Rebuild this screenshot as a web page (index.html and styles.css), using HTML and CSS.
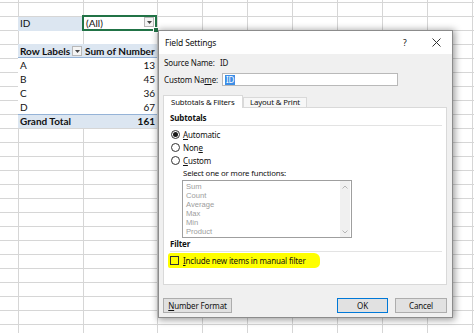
FILE: index.html
```html
<!DOCTYPE html>
<html>
<head>
<meta charset="utf-8">
<link rel="stylesheet" href="styles.css">
</head>
<body>
<div class="sheet">
  <div class="pivot">
    <div class="row r-filter">
      <div class="cell label-cell">ID</div>
      <div class="cell value-cell selected">(All)
        <span class="dd"><svg width="5" height="3" viewBox="0 0 5 3"><path d="M0 0h5L2.5 3z" fill="#444"/></svg></span>
        <span class="handle"></span>
      </div>
    </div>
    <div class="row r-gap"></div>
    <div class="row r-head">
      <div class="cell">Row Labels
        <span class="dd"><svg width="5" height="3" viewBox="0 0 5 3"><path d="M0 0h5L2.5 3z" fill="#444"/></svg></span>
      </div>
      <div class="cell">Sum of Number</div>
    </div>
    <div class="row r-data"><div class="cell">A</div><div class="cell num">13</div></div>
    <div class="row r-data"><div class="cell">B</div><div class="cell num">45</div></div>
    <div class="row r-data"><div class="cell">C</div><div class="cell num">36</div></div>
    <div class="row r-data"><div class="cell">D</div><div class="cell num">67</div></div>
    <div class="row r-total"><div class="cell">Grand Total</div><div class="cell num">161</div></div>
  </div>

  <div class="dialog">
    <div class="titlebar">
      <span class="title">Field Settings</span>
      <span class="help">?</span>
      <svg class="close" width="9" height="9" viewBox="0 0 9 9"><path d="M0.5 0.5l8 8M8.5 0.5l-8 8" stroke="#333" stroke-width="1"/></svg>
    </div>
    <div class="dbody">
      <div class="field"><span class="flabel">Source Name:</span><span>ID</span></div>
      <div class="field"><span class="flabel">Custom Na<u>m</u>e:</span><div class="input"><span class="sel">ID</span></div></div>
      <div class="tabs">
        <div class="tab active">Subtotals &amp; Filters</div>
        <div class="tab">Layout &amp; Print</div>
      </div>
      <div class="panel">
        <div class="section">Subtotals</div>
        <div class="radios">
          <div class="opt"><span class="radio on"></span><span><u>A</u>utomatic</span></div>
          <div class="opt"><span class="radio"></span><span>Non<u>e</u></span></div>
          <div class="opt"><span class="radio"></span><span><u>C</u>ustom</span></div>
        </div>
        <div class="hint">Select one or more functions:</div>
        <div class="listbox">
          <ul class="items">
            <li>Sum</li><li>Count</li><li>Average</li><li>Max</li><li>Min</li><li>Product</li>
          </ul>
          <div class="scroll">
            <svg width="6" height="4" viewBox="0 0 6 4"><path d="M0.5 3.5L3 1l2.5 2.5" fill="none" stroke="#b5b5b5"/></svg>
            <svg width="6" height="4" viewBox="0 0 6 4"><path d="M0.5 0.5L3 3l2.5-2.5" fill="none" stroke="#b5b5b5"/></svg>
          </div>
        </div>
        <div class="section">Filter</div>
        <div class="check-row">
          <span class="hl"><span class="checkbox"></span><span><u>I</u>nclude new items in manual filter</span></span>
        </div>
      </div>
      <div class="buttons">
        <button class="btn btn-nf"><u>N</u>umber Format</button>
        <button class="btn btn-ok">OK</button>
        <button class="btn btn-cancel">Cancel</button>
      </div>
    </div>
  </div>
</div>
</body>
</html>
```

FILE: styles.css
```css
html, body {
  margin: 0;
  padding: 0;
}
body {
  width: 474px;
  height: 333px;
  overflow: hidden;
  background: #fff;
}
.sheet {
  position: relative;
  height: 333px;
  box-sizing: border-box;
  padding-top: 16px;
  background-color: #fff;
  background-image:
    linear-gradient(#d6d6d6, #d6d6d6),
    linear-gradient(#d6d6d6, #d6d6d6),
    repeating-linear-gradient(to right, #d6d6d6 0 1px, transparent 1px 45px),
    repeating-linear-gradient(to bottom, #d6d6d6 0 1px, transparent 1px 14px);
  background-size: 1px 100%, 1px 100%, 100% 100%, 100% 100%;
  background-position: 18px 0, 83px 0, 157px 0, 0 2px;
  background-repeat: no-repeat;
}

/* Pivot table */
.pivot {
  margin-left: 18px;
  width: 139px;
}
.row {
  display: grid;
  grid-template-columns: 65px 74px;
  height: 14px;
}
.cell {
  position: relative;
  box-sizing: border-box;
  padding: 0 2px;
  font: 10px/14px Lato, "Liberation Sans", sans-serif;
  color: #111;
  white-space: nowrap;
}
.num { text-align: right; }
.label-cell {
  background: #dce6f1;
  margin-top: 1px;
  line-height: 13px;
}
.value-cell.selected {
  border: 2px solid #217346;
  margin: -1px 0 0 -1px;
  height: 16px;
  line-height: 12px;
  padding-left: 2px;
  width: 75px;
}
.dd {
  position: absolute;
  right: 2px;
  top: 2px;
  width: 8px;
  height: 8px;
  border: 1px solid #b8b8b8;
  background: #f4f4f4;
  display: flex;
  align-items: center;
  justify-content: center;
}
.value-cell .dd { right: 1px; top: 0; }
.handle {
  position: absolute;
  right: -4px;
  bottom: -4px;
  width: 4px;
  height: 4px;
  background: #217346;
  border: 1px solid #fff;
}
.r-head, .r-data, .r-total { background: #fff; }
.r-head {
  background: #dce6f1;
  box-shadow: inset 0 -1px #95b3d7;
}
.r-head .cell, .r-total .cell { font-weight: 700; }
.r-head .dd { right: 1px; }
.r-total {
  background: #dce6f1;
  box-shadow: inset 0 1px #95b3d7;
}

/* Dialog */
.dialog {
  position: absolute;
  left: 158px;
  top: 30px;
  width: 295px;
  height: 288px;
  box-sizing: border-box;
  border: 1px solid #8c8c8c;
  background: #f0f0f0;
  box-shadow: 1px 1px 7px 1px rgba(0, 0, 0, 0.38);
  font: 8px/12px "Noto Sans", "Open Sans", sans-serif;
  letter-spacing: -0.15px;
  color: #111;
}
.titlebar {
  height: 23px;
  background: #fff;
  display: flex;
  align-items: center;
  padding: 0 0 0 6px;
}
.title { flex: 1; font-size: 8.5px; }
.help { width: 10px; margin-right: 19px; font-size: 8.5px; }
.close { margin-right: 11px; }
.dbody {
  padding: 3px 5px 0 4px;
}
.field {
  display: flex;
  align-items: center;
  padding-left: 1px;
  height: 12px;
}
.field + .field { margin-top: 4px; height: 13px; }
.flabel { width: 56px; }
.input {
  margin-left: 2px;
  width: 176px;
  height: 13px;
  box-sizing: border-box;
  border: 1px solid #b9b9b9;
  background: #fff;
  display: flex;
  align-items: center;
  padding-left: 2px;
}
.sel {
  background: #3d8ee6;
  color: #fff;
  line-height: 10px;
  padding: 0 1px;
}
.tabs {
  margin-top: 9px;
  height: 12px;
  display: flex;
  align-items: flex-end;
}
.tab {
  box-sizing: border-box;
  height: 10px;
  line-height: 9px;
  border: 1px solid #d9d9d9;
  border-bottom: none;
  background: #f7f7f7;
  padding: 0 6px;
  font-size: 7.8px;
}
.tab.active {
  position: relative;
  z-index: 1;
  height: 13px;
  line-height: 12px;
  margin-bottom: -1px;
  background: #fff;
  width: 80px;
  padding: 0 0 0 7px;
}
.panel {
  height: 178px;
  box-sizing: border-box;
  border: 1px solid #d9d9d9;
  background: #fff;
  padding: 4px 4px 0 6px;
}
.section {
  font-weight: 700;
  padding-bottom: 1px;
  border-bottom: 1px solid #e3e3e3;
}
.radios {
  margin-top: 2px;
  padding-left: 1px;
}
.opt {
  height: 13px;
  display: flex;
  align-items: center;
  gap: 3px;
}
.radio {
  width: 9px;
  height: 9px;
  box-sizing: border-box;
  border: 1px solid #333;
  border-radius: 50%;
  display: flex;
  align-items: center;
  justify-content: center;
}
.radio.on::after {
  content: "";
  width: 5px;
  height: 5px;
  border-radius: 50%;
  background: #1a1a1a;
}
.hint {
  padding-left: 13px;
  height: 12px;
  font-size: 7.8px;
}
.listbox {
  margin: 1px 0 0 12px;
  width: 170px;
  height: 58px;
  box-sizing: border-box;
  border: 1px solid #9f9f9f;
  display: flex;
}
.items {
  list-style: none;
  margin: 0;
  padding: 1px 0 0 3px;
  flex: 1;
  color: #9d9d9d;
  font-family: "Liberation Sans", Arial, sans-serif;
  font-size: 7.6px;
  line-height: 9px;
  letter-spacing: 0;
}
.scroll {
  width: 10px;
  margin-right: 1px;
  background: #f0f0f0;
  display: flex;
  flex-direction: column;
  justify-content: space-between;
  align-items: center;
  padding: 4px 0 3px;
}
.check-row {
  margin-top: 1px;
  height: 15px;
  display: flex;
  align-items: center;
}
.hl {
  display: inline-flex;
  align-items: center;
  gap: 4px;
  margin-left: -2px;
  padding: 0 14px 0 2px;
  height: 15px;
  background: #ffff00;
  border-radius: 3px 6px 5px 2px;
}
.checkbox {
  width: 9px;
  height: 9px;
  box-sizing: border-box;
  border: 1px solid #333;
}
.buttons {
  margin-top: 13px;
  height: 15px;
  display: flex;
}
.btn {
  box-sizing: border-box;
  height: 15px;
  padding: 0;
  border: 1px solid #adadad;
  background: #e1e1e1;
  font: 8px/13px "Noto Sans", "Open Sans", sans-serif;
  letter-spacing: -0.15px;
  color: #111;
}
.btn-nf { width: 69px; }
.btn-ok {
  width: 51px;
  margin-left: auto;
  border-color: #0078d7;
}
.btn-cancel {
  width: 52px;
  margin-left: 7px;
}
```
